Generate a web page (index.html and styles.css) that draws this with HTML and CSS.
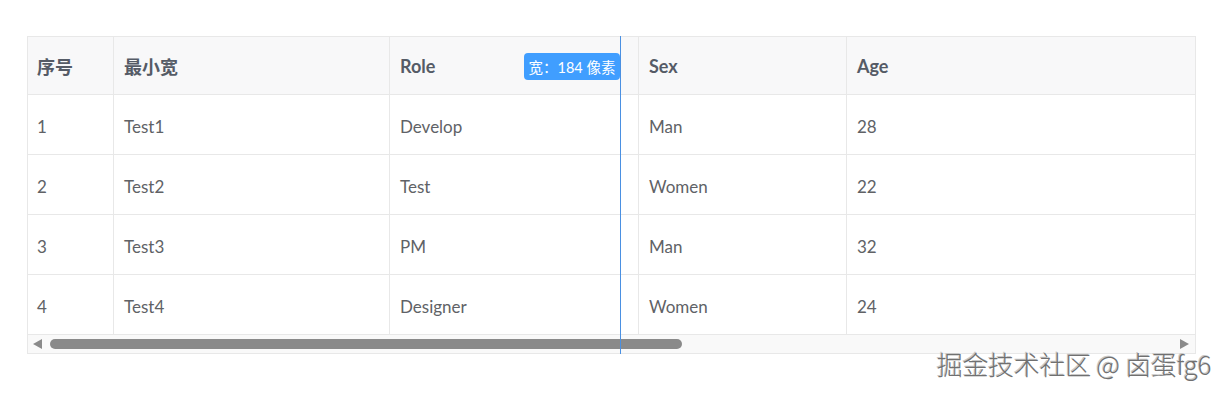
FILE: index.html
```html
<!DOCTYPE html>
<html lang="zh-CN">
<head>
<meta charset="utf-8">
<link rel="stylesheet" href="styles.css">
</head>
<body>
<div class="page">
  <div class="table">
    <div class="grid">
      <div class="cell head">序号</div>
      <div class="cell head">最小宽</div>
      <div class="cell head">Role</div>
      <div class="cell head">Sex</div>
      <div class="cell head last">Age</div>

      <div class="cell">1</div>
      <div class="cell">Test1</div>
      <div class="cell">Develop</div>
      <div class="cell">Man</div>
      <div class="cell last">28</div>

      <div class="cell">2</div>
      <div class="cell">Test2</div>
      <div class="cell">Test</div>
      <div class="cell">Women</div>
      <div class="cell last">22</div>

      <div class="cell">3</div>
      <div class="cell">Test3</div>
      <div class="cell">PM</div>
      <div class="cell">Man</div>
      <div class="cell last">32</div>

      <div class="cell">4</div>
      <div class="cell">Test4</div>
      <div class="cell">Designer</div>
      <div class="cell">Women</div>
      <div class="cell last">24</div>
    </div>
    <div class="scrollbar">
      <span class="arrow left"></span>
      <div class="track"><div class="thumb"></div></div>
      <span class="arrow right"></span>
    </div>
    <div class="resize-line"></div>
    <div class="resize-tip">宽：184 像素</div>
  </div>
  <div class="watermark">掘金技术社区 @ 卤蛋fg6</div>
</div>
</body>
</html>
```

FILE: styles.css
```css
* { box-sizing: border-box; }
html, body { margin: 0; padding: 0; background: #fff; }
body {
  font-family: Lato, "Noto Sans CJK SC", sans-serif;
  color: #606266;
}
.page {
  position: relative;
  width: 1225px;
  height: 397px;
  padding: 36px 0 0 27px;
}
.table {
  position: relative;
  width: 1169px;
  border: 1px solid #e8e8e8;
}
.grid {
  display: grid;
  grid-template-columns: 86px 276px 249px 208px 348px;
  grid-template-rows: 58px;
  grid-auto-rows: 60px;
}
.cell {
  display: flex;
  align-items: center;
  padding: 3px 0 0 10px;
  border-right: 1px solid #e8e8e8;
  border-bottom: 1px solid #e8e8e8;
  font-size: 17px;
  color: #606266;
}
.cell:nth-child(5n+1) { padding-left: 9px; }
.cell.last { border-right: none; }
.head {
  padding-top: 0;
  background: #f8f8f9;
  font-weight: 700;
  font-size: 18px;
  color: #555b66;
}
.scrollbar {
  display: flex;
  align-items: center;
  height: 18px;
  background: #f9f9f9;
  padding: 0 6px 0 5px;
}
.arrow {
  width: 0; height: 0;
  border-top: 5px solid transparent;
  border-bottom: 5px solid transparent;
}
.arrow.left { border-right: 9px solid #8a8a8a; }
.arrow.right { border-left: 9px solid #8a8a8a; }
.track {
  flex: 1;
  padding: 0 8px;
}
.thumb {
  width: 632px;
  height: 10px;
  border-radius: 5px;
  background: #8a8a8a;
}
.resize-line {
  position: absolute;
  left: 592px;
  top: -1px;
  bottom: -1px;
  width: 1px;
  background: #4a90e2;
}
.resize-tip {
  position: absolute;
  left: 496px;
  top: 16px;
  width: 96px;
  height: 27px;
  border-radius: 4px;
  background: #409eff;
  color: #fff;
  font-size: 14.5px;
  display: flex;
  align-items: center;
  justify-content: center;
  white-space: nowrap;
}
.watermark {
  position: absolute;
  right: 14px;
  top: 347px;
  font-size: 26px;
  line-height: 34px;
  font-weight: 300;
  color: #707070;
  text-shadow: 1px 1px 0 #fff, -1px -1px 0 #c8c8c8;
  font-family: "Noto Sans CJK SC", sans-serif;
  letter-spacing: -0.3px;
}
```
